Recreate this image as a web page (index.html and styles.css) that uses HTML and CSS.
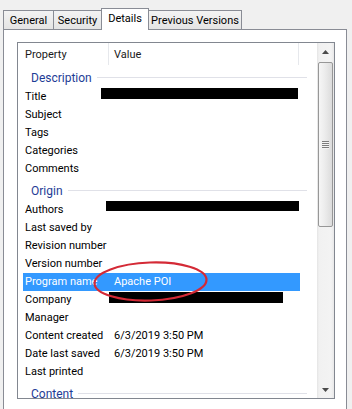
FILE: index.html
```html
<!DOCTYPE html>
<html>
<head>
<meta charset="utf-8">
<link rel="stylesheet" href="styles.css">
</head>
<body>
<div class="window">
  <div class="tabs">
    <div class="tab general">General</div>
    <div class="tab security">Security</div>
    <div class="tab details active">Details</div>
    <div class="tab previous">Previous Versions</div>
  </div>
  <div class="page">
    <div class="listbox">
      <div class="list">
        <div class="header">
          <div class="hcol prop">Property</div>
          <div class="hcol val">Value</div>
          <div class="hcol rest"></div>
        </div>
        <div class="group"><span>Description</span></div>
        <div class="row"><span class="k">Title</span><span class="v"></span></div>
        <div class="row"><span class="k">Subject</span><span class="v"></span></div>
        <div class="row"><span class="k">Tags</span><span class="v"></span></div>
        <div class="row"><span class="k">Categories</span><span class="v"></span></div>
        <div class="row"><span class="k">Comments</span><span class="v"></span></div>
        <div class="group"><span>Origin</span></div>
        <div class="row"><span class="k">Authors</span><span class="v"></span></div>
        <div class="row"><span class="k">Last saved by</span><span class="v"></span></div>
        <div class="row"><span class="k">Revision number</span><span class="v"></span></div>
        <div class="row"><span class="k">Version number</span><span class="v"></span></div>
        <div class="row sel"><span class="k">Program name</span><span class="v">Apache POI</span></div>
        <div class="row"><span class="k">Company</span><span class="v"></span></div>
        <div class="row"><span class="k">Manager</span><span class="v"></span></div>
        <div class="row"><span class="k">Content created</span><span class="v">6/3/2019 3:50 PM</span></div>
        <div class="row"><span class="k">Date last saved</span><span class="v">6/3/2019 3:50 PM</span></div>
        <div class="row"><span class="k">Last printed</span><span class="v"></span></div>
        <div class="group"><span>Content</span></div>

        <div class="redact r-title"></div>
        <div class="redact r-authors"></div>
        <div class="redact r-company"></div>
        <svg class="mark" width="299" height="354" viewBox="0 0 299 354">
          <ellipse cx="132.5" cy="238.5" rx="56" ry="19" fill="none" stroke="#d42a36" stroke-width="2.2" transform="rotate(-2 132.5 238.5)"/>
        </svg>
      </div>
      <div class="scrollbar">
        <div class="sb-btn">
          <svg width="7" height="4" viewBox="0 0 7 4"><polygon points="3.5,0 7,4 0,4" fill="#4a4a4a"/></svg>
        </div>
        <div class="sb-track">
          <div class="thumb"><div class="grip"></div></div>
        </div>
        <div class="sb-btn">
          <svg width="7" height="4" viewBox="0 0 7 4"><polygon points="0,0 7,0 3.5,4" fill="#4a4a4a"/></svg>
        </div>
      </div>
    </div>
  </div>
</div>
</body>
</html>
```
FILE: styles.css
```css
* { box-sizing: border-box; }

body {
  margin: 0;
  width: 352px;
  height: 409px;
  overflow: hidden;
  background: #f0f0f0;
  font-family: Roboto, "Noto Sans", sans-serif;
  font-size: 11px;
  color: #000;
}

.window {
  padding: 8px 0 0 3px;
}

.tabs {
  display: flex;
  align-items: flex-end;
  height: 21px;
  position: relative;
  z-index: 1;
}

.tab {
  height: 19px;
  border: 1px solid #898c95;
  border-bottom: none;
  background: linear-gradient(#f3f3f3, #e4e4e4);
  line-height: 17px;
  padding-top: 1px;
  text-align: center;
  margin-left: -1px;
  white-space: nowrap;
}

.tab.general { margin-left: 0; width: 51px; }
.tab.security { width: 49px; }
.tab.details { width: 48px; }
.tab.previous { width: 94px; }

.tab.active {
  height: 22px;
  margin-bottom: -1px;
  background: #fff;
  position: relative;
  z-index: 2;
}

.page {
  width: 344px;
  height: 390px;
  border: 1px solid #898c95;
  background: #fff;
  padding: 12px 0 0 13px;
}

.listbox {
  width: 318px;
  height: 357px;
  border: 1px solid #828790;
  display: flex;
}

.list {
  width: 299px;
  position: relative;
  overflow: hidden;
}

.header {
  display: flex;
  height: 22px;
}

.hcol {
  line-height: 21px;
  padding-top: 1px;
  color: #1a1a1a;
}

.hcol.prop {
  width: 91px;
  padding-left: 7px;
  border-right: 1px solid #e6e8ec;
}

.hcol.val {
  width: 190px;
  padding-left: 5px;
  border-right: 1px solid #e6e8ec;
}

.hcol.rest { flex: 1; }

.group {
  height: 23px;
  display: flex;
  align-items: center;
  padding: 2px 10px 0 13px;
  color: #1e3c96;
  font-size: 12px;
}

.group::after {
  content: "";
  flex: 1;
  height: 1px;
  margin-left: 5px;
  background: #e0e1e8;
}

.row {
  display: flex;
  height: 18px;
  line-height: 18px;
  margin: 0 17px 0 5px;
  padding-left: 2px;
  white-space: nowrap;
}

.row .k { width: 89px; }

.row.sel {
  background: #3399ff;
  color: #fff;
}

.redact {
  position: absolute;
  background: #000;
}

.r-title { left: 83px; top: 45px; width: 197px; height: 11px; }
.r-authors { left: 88px; top: 158px; width: 193px; height: 10px; }
.r-company { left: 91px; top: 249px; width: 174px; height: 11px; }

.mark {
  position: absolute;
  left: 0;
  top: 0;
}

.scrollbar {
  width: 17px;
  display: flex;
  flex-direction: column;
  background: linear-gradient(90deg, #e4e4e4 0, #f1f1f1 2px, #f3f3f3 14px, #e8e8e8 100%);
}

.sb-btn {
  height: 17px;
  display: flex;
  align-items: center;
  justify-content: center;
}

.sb-track {
  flex: 1;
  padding-top: 2px;
}

.thumb {
  margin-left: 1px;
  width: 15px;
  height: 165px;
  border: 1px solid #979797;
  border-radius: 2px;
  background: linear-gradient(90deg, #f6f6f6 0, #ececec 45%, #dcdcdc 100%);
  display: flex;
  align-items: center;
  justify-content: center;
}

.grip {
  width: 7px;
  height: 8px;
  background: repeating-linear-gradient(#7d7d7d 0, #7d7d7d 1px, #f4f4f4 1px, #f4f4f4 2px);
}
```
